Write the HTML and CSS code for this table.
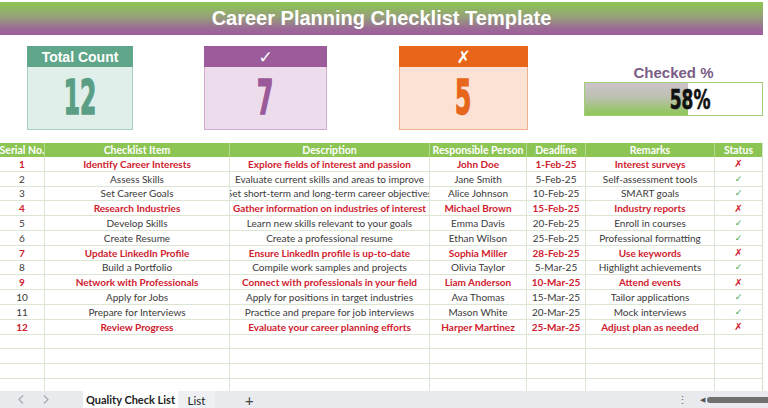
FILE: index.html
```html
<!DOCTYPE html>
<html>
<head>
<meta charset="utf-8">
<link rel="stylesheet" href="styles.css">
</head>
<body>
<div class="title">Career Planning Checklist Template</div>
<div class="kpis">
  <div class="card card-teal">
    <div class="card-head">Total Count</div>
    <div class="card-body"><span class="num">12</span></div>
  </div>
  <div class="card card-purple">
    <div class="card-head glyph">✓</div>
    <div class="card-body"><span class="num">7</span></div>
  </div>
  <div class="card card-orange">
    <div class="card-head glyph">✗</div>
    <div class="card-body"><span class="num">5</span></div>
  </div>
  <div class="pct">
    <div class="pct-label">Checked %</div>
    <div class="pct-bar">
      <div class="pct-fill" style="width:58%"></div>
      <span class="pct-text">58%</span>
    </div>
  </div>
</div>
<div class="sheet">
  <div class="grid">
    <div class="hd">Serial No.</div><div class="hd">Checklist Item</div><div class="hd">Description</div><div class="hd">Responsible Person</div><div class="hd">Deadline</div><div class="hd">Remarks</div><div class="hd">Status</div>

    <div class="c r">1</div><div class="c r">Identify Career Interests</div><div class="c r">Explore fields of interest and passion</div><div class="c r">John Doe</div><div class="c r">1-Feb-25</div><div class="c r">Interest surveys</div><div class="c x">✗</div>
    <div class="c">2</div><div class="c">Assess Skills</div><div class="c">Evaluate current skills and areas to improve</div><div class="c">Jane Smith</div><div class="c">5-Feb-25</div><div class="c">Self-assessment tools</div><div class="c ok">✓</div>
    <div class="c">3</div><div class="c">Set Career Goals</div><div class="c">Set short-term and long-term career objectives</div><div class="c">Alice Johnson</div><div class="c">10-Feb-25</div><div class="c">SMART goals</div><div class="c ok">✓</div>
    <div class="c r">4</div><div class="c r">Research Industries</div><div class="c r">Gather information on industries of interest</div><div class="c r">Michael Brown</div><div class="c r">15-Feb-25</div><div class="c r">Industry reports</div><div class="c x">✗</div>
    <div class="c">5</div><div class="c">Develop Skills</div><div class="c">Learn new skills relevant to your goals</div><div class="c">Emma Davis</div><div class="c">20-Feb-25</div><div class="c">Enroll in courses</div><div class="c ok">✓</div>
    <div class="c">6</div><div class="c">Create Resume</div><div class="c">Create a professional resume</div><div class="c">Ethan Wilson</div><div class="c">25-Feb-25</div><div class="c">Professional formatting</div><div class="c ok">✓</div>
    <div class="c r">7</div><div class="c r">Update LinkedIn Profile</div><div class="c r">Ensure LinkedIn profile is up-to-date</div><div class="c r">Sophia Miller</div><div class="c r">28-Feb-25</div><div class="c r">Use keywords</div><div class="c x">✗</div>
    <div class="c">8</div><div class="c">Build a Portfolio</div><div class="c">Compile work samples and projects</div><div class="c">Olivia Taylor</div><div class="c">5-Mar-25</div><div class="c">Highlight achievements</div><div class="c ok">✓</div>
    <div class="c r">9</div><div class="c r">Network with Professionals</div><div class="c r">Connect with professionals in your field</div><div class="c r">Liam Anderson</div><div class="c r">10-Mar-25</div><div class="c r">Attend events</div><div class="c x">✗</div>
    <div class="c">10</div><div class="c">Apply for Jobs</div><div class="c">Apply for positions in target industries</div><div class="c">Ava Thomas</div><div class="c">15-Mar-25</div><div class="c">Tailor applications</div><div class="c ok">✓</div>
    <div class="c">11</div><div class="c">Prepare for Interviews</div><div class="c">Practice and prepare for job interviews</div><div class="c">Mason White</div><div class="c">20-Mar-25</div><div class="c">Mock interviews</div><div class="c ok">✓</div>
    <div class="c r">12</div><div class="c r">Review Progress</div><div class="c r">Evaluate your career planning efforts</div><div class="c r">Harper Martinez</div><div class="c r">25-Mar-25</div><div class="c r">Adjust plan as needed</div><div class="c x">✗</div>

    <div class="c"></div><div class="c"></div><div class="c"></div><div class="c"></div><div class="c"></div><div class="c"></div><div class="c"></div>
    <div class="c"></div><div class="c"></div><div class="c"></div><div class="c"></div><div class="c"></div><div class="c"></div><div class="c"></div>
    <div class="c"></div><div class="c"></div><div class="c"></div><div class="c"></div><div class="c"></div><div class="c"></div><div class="c"></div>
    <div class="c"></div><div class="c"></div><div class="c"></div><div class="c"></div><div class="c"></div><div class="c"></div><div class="c"></div>
  </div>
</div>
<div class="tabs">
  <span class="nav"><svg width="6" height="9" viewBox="0 0 6 9"><path d="M5 0.5 L1 4.5 L5 8.5" fill="none" stroke="#a3a6ab" stroke-width="1.1"/></svg></span>
  <span class="nav"><svg width="6" height="9" viewBox="0 0 6 9"><path d="M1 0.5 L5 4.5 L1 8.5" fill="none" stroke="#a3a6ab" stroke-width="1.1"/></svg></span>
  <span class="tab active">Quality Check List</span>
  <span class="tab other">List</span>
  <span class="plus">+</span>
  <span class="spacer"></span>
  <span class="dots">⋮</span>
  <span class="arrow">◀</span>
  <span class="thumb"></span>
</div>
</body>
</html>
```

FILE: styles.css
```css
* { box-sizing: border-box; }
html, body { margin: 0; padding: 0; }
body {
  width: 768px;
  height: 408px;
  overflow: hidden;
  background: #ffffff;
  font-family: "Lato", "Liberation Sans", sans-serif;
}

.title {
  margin-top: 2px;
  width: 763px;
  height: 33px;
  display: flex;
  align-items: center;
  justify-content: center;
  background: linear-gradient(to bottom, #8cc651 0%, #96a07a 45%, #9c6a96 80%, #9d5e9d 100%);
  color: #ffffff;
  font-family: "Liberation Sans", Arial, sans-serif;
  font-weight: bold;
  font-size: 20px;
  padding-left: 0;
}

.kpis {
  height: 108px;
  padding-top: 11px;
  display: flex;
  align-items: flex-start;
}

.card {
  height: 84px;
  display: flex;
  flex-direction: column;
}
.card-teal { margin-left: 27px; width: 106px; }
.card-purple { margin-left: 71px; width: 123px; }
.card-orange { margin-left: 72px; width: 129px; }

.card-head {
  height: 21px;
  display: flex;
  align-items: center;
  justify-content: center;
  color: #ffffff;
  font-family: "Liberation Sans", Arial, sans-serif;
  font-weight: bold;
  font-size: 14px;
}
.card-head.glyph { font-size: 17px; font-family: "DejaVu Sans", sans-serif; }
.card-body {
  flex: 1;
  display: flex;
  align-items: center;
  justify-content: center;
  border: 1px solid;
  border-top: none;
  overflow: hidden;
}
.num {
  display: inline-block;
  font-family: "DejaVu Sans Condensed", "DejaVu Sans", sans-serif;
  font-weight: bold;
  font-size: 48px;
  line-height: 1;
  transform: scaleX(0.54);
  -webkit-text-stroke: 1.6px currentColor;
  margin-top: -2px;
}

.card-teal .card-head { background: #5fa68a; }
.card-teal .card-body { background: #e0efe9; border-color: #a7d1c1; color: #5a9f85; }
.card-purple .card-head { background: #9c5b9b; }
.card-purple .card-body { background: #eddcec; border-color: #d2abd1; color: #9a5a99; }
.card-orange .card-head { background: #e8661a; }
.card-orange .card-body { background: #fce2d5; border-color: #efb08e; color: #e6671c; }

.pct {
  margin-left: 56px;
  width: 179px;
  display: flex;
  flex-direction: column;
  align-items: stretch;
}
.pct-label {
  margin-top: 19px;
  height: 16px;
  line-height: 16px;
  text-align: center;
  font-family: "Liberation Sans", Arial, sans-serif;
  font-weight: bold;
  font-size: 15px;
  color: #7b5d86;
}
.pct-bar {
  position: relative;
  margin-top: 1px;
  height: 34px;
  border: 1px solid #9fcd78;
  background: #ffffff;
  display: flex;
  align-items: center;
  justify-content: center;
  padding-left: 33px;
}
.pct-fill {
  position: absolute;
  left: 0;
  top: 0;
  bottom: 0;
  background: linear-gradient(to bottom, #ccc3cc 0%, #bcc1b0 45%, #8dc656 100%);
}
.pct-text {
  position: relative;
  display: inline-block;
  font-family: "DejaVu Sans Condensed", "DejaVu Sans", sans-serif;
  font-weight: bold;
  font-size: 27px;
  line-height: 1;
  color: #111111;
  transform: scaleX(0.7);
  -webkit-text-stroke: 0.6px #111111;
}

.sheet {
  height: 248px;
  overflow: hidden;
}
.grid {
  width: 763px;
  display: grid;
  grid-template-columns: 45px 185px 200px 97px 59px 129px 48px;
  grid-template-rows: 14px;
  grid-auto-rows: 14.8px;
}
.hd, .c {
  display: flex;
  align-items: center;
  justify-content: center;
  white-space: nowrap;
  overflow: hidden;
  font-size: 10px;
}
.hd {
  background: #8cc553;
  color: #ffffff;
  font-weight: bold;
  font-size: 10.5px;
  border-right: 1px solid #b3d990;
}
.c {
  color: #3a3a3a;
  border-right: 1px solid #dde6d3;
  border-bottom: 1px solid #dde6d3;
}
.grid > :nth-child(7n) { border-right-color: #d3dfc6; }
.c.r {
  color: #d0202e;
  font-weight: bold;
}
.c.ok {
  color: #3aa64a;
  font-family: "DejaVu Sans", sans-serif;
  font-size: 9px;
}
.c.x {
  color: #d0202e;
  font-family: "DejaVu Sans", sans-serif;
  font-size: 10px;
  font-weight: bold;
}

.tabs {
  height: 17px;
  background: #e8eaee;
  display: flex;
  align-items: stretch;
  font-family: "Lato", "Liberation Sans", sans-serif;
}
.nav {
  display: flex;
  align-items: center;
  justify-content: center;
  width: 25px;
}
.nav:first-child { margin-left: 8px; }
.tab {
  display: flex;
  align-items: center;
  font-size: 11px;
  color: #222222;
}
.tab.active {
  margin-left: 25px;
  width: 95px;
  justify-content: center;
  background: #ffffff;
  font-weight: bold;
}
.tab.other {
  width: 37px;
  justify-content: center;
  background: #eef0f3;
  padding-top: 2px;
  font-size: 11.5px;
}
.plus {
  display: flex;
  align-items: center;
  margin-left: 30px;
  font-size: 15px;
  color: #444444;
}
.spacer { flex: 1; }
.dots {
  display: flex;
  align-items: center;
  font-size: 11px;
  color: #666666;
  margin-right: 12px;
}
.arrow {
  display: flex;
  align-items: center;
  font-size: 7px;
  color: #555555;
  margin-right: 2px;
}
.thumb {
  align-self: center;
  width: 61px;
  height: 6px;
  border-radius: 3px 0 0 3px;
  background: #707070;
}
```
